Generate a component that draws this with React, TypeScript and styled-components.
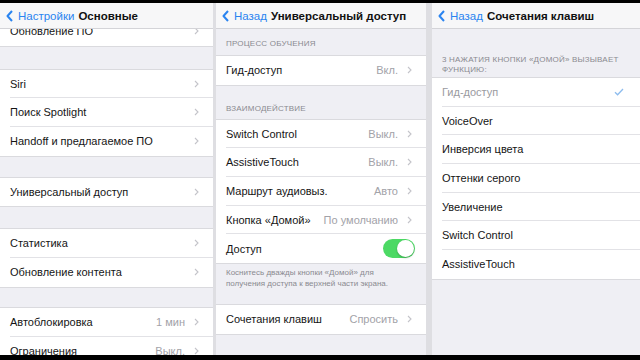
import * as React from 'react';
import styled, { createGlobalStyle } from 'styled-components';

const Global = createGlobalStyle`
  html, body { margin: 0; padding: 0; background: #000; }
  body { font-family: "Liberation Sans", Arial, sans-serif; }
`;

const Screen = styled.div`
  width: 640px;
  height: 360px;
  background: #000;
  padding-top: 3px;
  box-sizing: border-box;
`;

const Panels = styled.div`
  height: 352px;
  display: flex;
  background: #dedee2;
  gap: 3px;
`;

const Panel = styled.div<{ $w: number }>`
  width: ${p => p.$w}px;
  height: 352px;
  flex: none;
  background: #efeff4;
  display: flex;
  flex-direction: column;
  overflow: hidden;
  & + & + & { margin-left: 3px; }
`;

const NavBar = styled.div`
  height: 26px;
  flex: none;
  background: #f7f7f8;
  border-bottom: 1px solid #d4d4d8;
  box-sizing: border-box;
  display: flex;
  align-items: center;
  padding-left: 6px;
  font-size: 11.5px;
  white-space: nowrap;
`;

const Back = styled.span`
  color: #2a84f0;
  display: flex;
  align-items: center;
  gap: 5px;
  margin-right: 4px;
`;

const Title = styled.span`
  color: #111;
  font-weight: bold;
`;

const Body = styled.div<{ $offset?: number }>`
  flex: 1;
  min-height: 0;
  overflow: hidden;
  & > div:first-child { margin-top: ${p => p.$offset || 0}px; }
`;

const Gap = styled.div<{ $h: number }>`
  height: ${p => p.$h}px;
  display: flex;
  flex-direction: column;
  justify-content: flex-end;
  padding: 0 12px 0 10px;
  box-sizing: border-box;
`;

const Caption = styled.div<{ $pb?: number; $lh?: number }>`
  font-size: 8px;
  line-height: ${p => p.$lh || 10}px;
  color: #8a8a90;
  text-transform: uppercase;
  letter-spacing: 0.2px;
  padding-bottom: ${p => p.$pb ?? 6}px;
`;

const Footnote = styled.div`
  font-size: 8px;
  line-height: 10.5px;
  color: #8a8a90;
  padding: 4px 12px 0 10px;
`;

const Group = styled.div`
  background: #fff;
  border-top: 1px solid #dadade;
  border-bottom: 1px solid #dadade;
`;

const Row = styled.div`
  height: 28.7px;
  box-sizing: border-box;
  padding-left: 10px;
  display: flex;
  &:not(:last-child) > div { border-bottom: 1px solid #e2e2e6; }
`;

const RowInner = styled.div<{ $pr?: number }>`
  flex: 1;
  display: flex;
  align-items: center;
  justify-content: space-between;
  padding-right: ${p => p.$pr ?? 14}px;
  font-size: 11px;
  white-space: nowrap;
`;

const Label = styled.span<{ $dim?: boolean }>`
  color: ${p => (p.$dim ? '#9a9aa0' : '#151515')};
`;

const Detail = styled.span`
  display: flex;
  align-items: center;
  gap: 9px;
  color: #a2a2a8;
`;

const Toggle = styled.div`
  width: 32px;
  height: 19px;
  border-radius: 10px;
  background: #4cd964;
  display: flex;
  justify-content: flex-end;
  align-items: center;
  padding: 1px;
  box-sizing: border-box;
  margin-right: -3px;
`;

const Knob = styled.div`
  width: 17px;
  height: 17px;
  border-radius: 50%;
  background: #fff;
  box-shadow: 0 1px 2px rgba(0, 0, 0, 0.25);
`;

const BackChevron = () => (
  <svg width="7" height="12" viewBox="0 0 7 12">
    <polyline points="6,1 1.5,6 6,11" fill="none" stroke="#2a84f0" strokeWidth="2" strokeLinejoin="round" />
  </svg>
);

const Chevron = () => (
  <svg width="5" height="8" viewBox="0 0 5 8">
    <polyline points="1,1 4,4 1,7" fill="none" stroke="#c4c4ca" strokeWidth="1.1" />
  </svg>
);

const Check = () => (
  <svg width="10" height="8" viewBox="0 0 10 8">
    <polyline points="1,4.2 3.6,6.8 9,1" fill="none" stroke="#8dbcee" strokeWidth="1.3" />
  </svg>
);

type Item = { label: string; value?: string; chevron?: boolean; toggle?: boolean; check?: boolean; dim?: boolean };

function Cell({ item, pr }: { item: Item; pr?: number }) {
  return (
    <Row>
      <RowInner $pr={pr}>
        <Label $dim={item.dim}>{item.label}</Label>
        {item.toggle ? (
          <Toggle><Knob /></Toggle>
        ) : item.check ? (
          <Check />
        ) : item.chevron !== false ? (
          <Detail>
            {item.value}
            <Chevron />
          </Detail>
        ) : null}
      </RowInner>
    </Row>
  );
}

function List({ items, pr }: { items: Item[]; pr?: number }) {
  return (
    <Group>
      {items.map((it, i) => (
        <Cell key={i} item={it} pr={pr} />
      ))}
    </Group>
  );
}

function Nav({ back, title }: { back: string; title: string }) {
  return (
    <NavBar>
      <Back>
        <BackChevron />
        {back}
      </Back>
      <Title>{title}</Title>
    </NavBar>
  );
}

const shortcuts: Item[] = [
  { label: 'Гид-доступ', check: true, dim: true },
  { label: 'VoiceOver', chevron: false },
  { label: 'Инверсия цвета', chevron: false },
  { label: 'Оттенки серого', chevron: false },
  { label: 'Увеличение', chevron: false },
  { label: 'Switch Control', chevron: false },
  { label: 'AssistiveTouch', chevron: false },
];

export default function App() {
  return (
    <Screen>
      <Global />
      <Panels>
        <Panel $w={213}>
          <Nav back="Настройки" title="Основные" />
          <Body $offset={-13}>
            <List items={[{ label: 'Обновление ПО' }]} />
            <Gap $h={22} />
            <List items={[{ label: 'Siri' }, { label: 'Поиск Spotlight' }, { label: 'Handoff и предлагаемое ПО' }]} />
            <Gap $h={20} />
            <List items={[{ label: 'Универсальный доступ' }]} />
            <Gap $h={21} />
            <List items={[{ label: 'Статистика' }, { label: 'Обновление контента' }]} />
            <Gap $h={19} />
            <List items={[{ label: 'Автоблокировка', value: '1 мин' }, { label: 'Ограничения', value: 'Выкл.' }]} />
          </Body>
        </Panel>
        <Panel $w={210}>
          <Nav back="Назад" title="Универсальный доступ" />
          <Body>
            <Gap $h={26}>
              <Caption>Процесс обучения</Caption>
            </Gap>
            <List items={[{ label: 'Гид-доступ', value: 'Вкл.' }]} />
            <Gap $h={33}>
              <Caption $pb={5}>Взаимодействие</Caption>
            </Gap>
            <List
              items={[
                { label: 'Switch Control', value: 'Выкл.' },
                { label: 'AssistiveTouch', value: 'Выкл.' },
                { label: 'Маршрут аудиовыз.', value: 'Авто' },
                { label: 'Кнопка «Домой»', value: 'По умолчанию' },
                { label: 'Доступ', toggle: true },
              ]}
            />
            <Footnote>
              Коснитесь дважды кнопки «Домой» для получения доступа к верхней части экрана.
            </Footnote>
            <Gap $h={15} />
            <List items={[{ label: 'Сочетания клавиш', value: 'Спросить' }]} />
          </Body>
        </Panel>
        <Panel $w={208}>
          <Nav back="Назад" title="Сочетания клавиш" />
          <Body>
            <Gap $h={48}>
              <Caption $pb={2}>3 нажатия кнопки «Домой» вызывает функцию:</Caption>
            </Gap>
            <List items={shortcuts} pr={16} />
          </Body>
        </Panel>
      </Panels>
    </Screen>
  );
}
